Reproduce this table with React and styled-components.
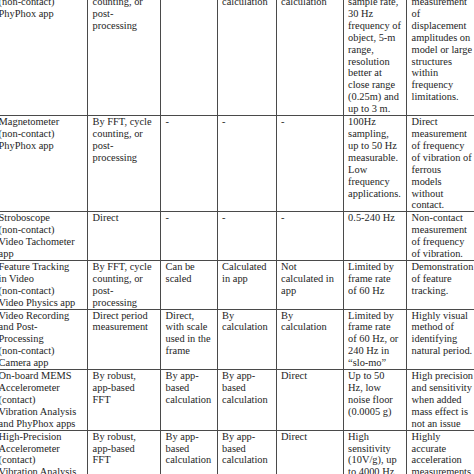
import React from "react";
import styled, { createGlobalStyle } from "styled-components";

const Global = createGlobalStyle`
  html, body {
    margin: 0;
    padding: 0;
    background: #ffffff;
    overflow: hidden;
    width: 474px;
    height: 474px;
  }
  body {
    font-family: "Liberation Serif", "Times New Roman", serif;
  }
`;

const Table = styled.div`
  display: grid;
  grid-template-columns: 94px 73px 56.5px 59px 67px 63.5px 73px;
  width: max-content;
  margin: -5px 0 0 -7px;
  border-top: 1px solid #4a4a4a;
  border-left: 1px solid #4a4a4a;
  color: #1e1e1e;
  font-size: 10.4px;
  line-height: 11.9px;
`;

const Cell = styled.div`
  box-sizing: border-box;
  border-right: 1px solid #4a4a4a;
  border-bottom: 1px solid #4a4a4a;
  padding: 0 0 0 4.6px;
  min-width: 0;
`;

const Line = styled.span`
  display: block;
  white-space: nowrap;
`;

const rows = [
  [
    ["(non-contact)", "PhyPhox app"],
    ["counting, or", "post-", "processing"],
    [],
    ["calculation"],
    ["calculation"],
    [
      "sample rate,",
      "30 Hz",
      "frequency of",
      "object, 5-m",
      "range,",
      "resolution",
      "better at",
      "close range",
      "(0.25m) and",
      "up to 3 m.",
    ],
    [
      "measurement",
      "of",
      "displacement",
      "amplitudes on",
      "model or large",
      "structures",
      "within",
      "frequency",
      "limitations.",
    ],
  ],
  [
    ["Magnetometer", "(non-contact)", "PhyPhox app"],
    ["By FFT, cycle", "counting, or", "post-", "processing"],
    ["-"],
    ["-"],
    ["-"],
    [
      "100Hz",
      "sampling,",
      "up to 50 Hz",
      "measurable.",
      "Low",
      "frequency",
      "applications.",
    ],
    [
      "Direct",
      "measurement",
      "of frequency",
      "of vibration of",
      "ferrous",
      "models",
      "without",
      "contact.",
    ],
  ],
  [
    ["Stroboscope", "(non-contact)", "Video Tachometer", "app"],
    ["Direct"],
    ["-"],
    ["-"],
    ["-"],
    ["0.5-240 Hz"],
    ["Non-contact", "measurement", "of frequency", "of vibration."],
  ],
  [
    ["Feature Tracking", "in Video", "(non-contact)", "Video Physics app"],
    ["By FFT, cycle", "counting, or", "post-", "processing"],
    ["Can be", "scaled"],
    ["Calculated", "in app"],
    ["Not", "calculated in", "app"],
    ["Limited by", "frame rate", "of 60 Hz"],
    ["Demonstration", "of feature", "tracking."],
  ],
  [
    ["Video Recording", "and Post-", "Processing", "(non-contact)", "Camera app"],
    ["Direct period", "measurement"],
    ["Direct,", "with scale", "used in the", "frame"],
    ["By", "calculation"],
    ["By", "calculation"],
    ["Limited by", "frame rate", "of 60 Hz, or", "240 Hz in", "\u201Cslo-mo\u201D"],
    ["Highly visual", "method of", "identifying", "natural period."],
  ],
  [
    [
      "On-board MEMS",
      "Accelerometer",
      "(contact)",
      "Vibration Analysis",
      "and PhyPhox apps",
    ],
    ["By robust,", "app-based", "FFT"],
    ["By app-", "based", "calculation"],
    ["By app-", "based", "calculation"],
    ["Direct"],
    ["Up to 50", "Hz, low", "noise floor", "(0.0005 g)"],
    [
      "High precision",
      "and sensitivity",
      "when added",
      "mass effect is",
      "not an issue",
    ],
  ],
  [
    [
      "High-Precision",
      "Accelerometer",
      "(contact)",
      "Vibration Analysis",
      "and PhyPhox apps",
    ],
    ["By robust,", "app-based", "FFT"],
    ["By app-", "based", "calculation"],
    ["By app-", "based", "calculation"],
    ["Direct"],
    ["High", "sensitivity", "(10V/g), up", "to 4000 Hz"],
    ["Highly", "accurate", "acceleration", "measurements"],
  ],
];

export default function App() {
  return (
    <>
      <Global />
      <Table>
        {rows.map((row, r) =>
          row.map((lines, c) => (
            <Cell key={`${r}-${c}`}>
              {lines.map((t, i) => (
                <Line key={i}>{t}</Line>
              ))}
            </Cell>
          ))
        )}
      </Table>
    </>
  );
}
